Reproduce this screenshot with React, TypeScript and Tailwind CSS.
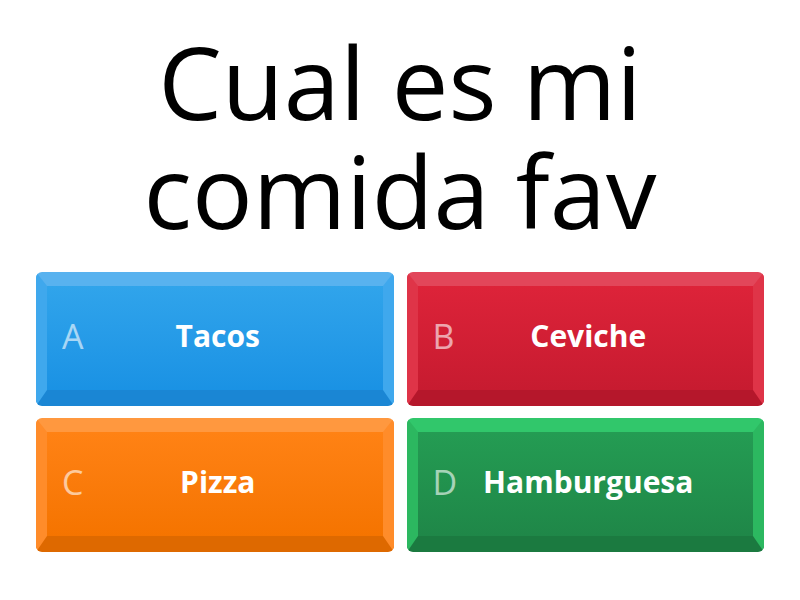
const answers = [
  {
    letter: 'A',
    label: 'Tacos',
    outer: 'border-t-[#58b2ef] border-x-[#3fa8ed] border-b-[#1a86d4]',
    face: 'bg-gradient-to-b from-[#30a4eb] to-[#1a92e4]',
  },
  {
    letter: 'B',
    label: 'Ceviche',
    outer: 'border-t-[#e2465a] border-x-[#df3448] border-b-[#b5172b]',
    face: 'bg-gradient-to-b from-[#dd2339] to-[#c71b30]',
  },
  {
    letter: 'C',
    label: 'Pizza',
    outer: 'border-t-[#ff983f] border-x-[#ff8c2a] border-b-[#de6900]',
    face: 'bg-gradient-to-b from-[#ff8214] to-[#f57400]',
  },
  {
    letter: 'D',
    label: 'Hamburguesa',
    outer: 'border-t-[#31c76b] border-x-[#2cb860] border-b-[#1b7a40]',
    face: 'bg-gradient-to-b from-[#249c53] to-[#1f8748]',
  },
];

export default function App() {
  return (
    <div className="w-[800px] h-[600px] bg-white font-['Open_Sans',sans-serif] flex flex-col">
      <h1 className="pt-[27px] text-center text-[101px] leading-[109px] text-black font-normal">
        Cual es mi
        <br />
        comida fav
      </h1>
      <div className="mt-[27px] px-9 grid grid-cols-2 gap-x-[13px] gap-y-[12px]">
        {answers.map((a) => (
          <div
            key={a.letter}
            className={`h-[134px] rounded-md border-t-[14px] border-x-[11px] border-b-[16px] ${a.outer}`}
          >
            <div className={`h-full pb-[5px] flex items-center text-white ${a.face}`}>
              <span className="pl-[15px] w-[60px] text-[34px] leading-none opacity-60">
                {a.letter}
              </span>
              <span className="flex-1 pr-[54px] text-center text-[30px] font-bold">
                {a.label}
              </span>
            </div>
          </div>
        ))}
      </div>
    </div>
  );
}
